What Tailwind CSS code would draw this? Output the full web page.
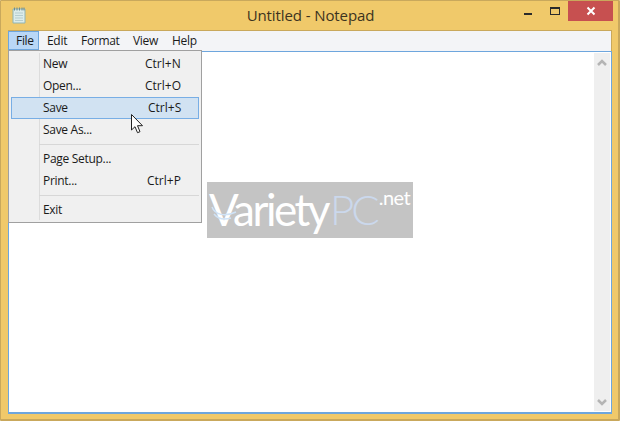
<!DOCTYPE html>
<html lang="en">
<head>
    <meta charset="UTF-8" />
    <title>Untitled - Notepad</title>
    <script src="https://cdn.jsdelivr.net/npm/@tailwindcss/browser@4"></script>
</head>
<body class="bg-white font-['Open_Sans',sans-serif] text-[12px] tracking-[-0.3px] text-[#1a1a1a]">
    <div class="relative w-[620px] h-[421px] overflow-hidden">
        <!-- window frame -->
        <div class="flex flex-col w-[620px] h-[421px] bg-[#f0c96a] border-t border-l border-r-2 border-b-2 border-[#c9a85c] rounded-[1px]">
            <div class="relative flex items-center h-[29px] shrink-0">
                <svg class="absolute left-[10px] top-[6px]" width="16" height="17" viewBox="0 0 16 17">
                    <path d="M2 2h12v14H2z" fill="#dcecea" stroke="#8fb4b4" />
                    <path d="M4 6h8M4 8.500h8M4 11h8M4 13.500h8" stroke="#b5cdd0" />
                    <path d="M3.500 0.500v3M6 0.500v3M8.500 0.500v3M11 0.500v3M13 0.500v3" stroke="#6d8c92" />
                </svg>
                <div class="flex-1 text-center text-[15px] tracking-[-0.1px] text-[#3c3320] pl-[2px]">Untitled - Notepad</div>
                <!-- caption buttons -->
                <div class="absolute right-[5px] top-0 flex items-start">
                    <div class="flex justify-center w-[26px] h-[20px] pt-[12px]"><div class="w-[8px] h-[2px] bg-[#2b2b2b]"></div></div>
                    <div class="flex justify-center w-[26px] h-[20px] ml-[1px] pt-[6px]"><div class="w-[10px] h-[8px] border border-t-2 border-[#2b2b2b]"></div></div>
                    <div class="flex items-center justify-center w-[45px] h-[20px] bg-[#c75050]">
                        <svg width="10" height="10" viewBox="0 0 10 10"><path d="M1.500 1.500l7 7M8.500 1.500l-7 7" stroke="#fff" stroke-width="2" /></svg>
                    </div>
                </div>
            </div>
            <!-- menu bar -->
            <div class="flex ml-[7px] mr-[6px] h-[21px] shrink-0 bg-[#f3f4f7] border-t border-r border-t-[#c9a85c] border-r-[#c9a85c]">
                <div class="flex items-center w-[31px] pl-[7px] h-[19px] bg-[#b9d7f6] border border-[#6ea6dd]">File</div>
                <div class="flex items-center pl-[8px] w-[34px]">Edit</div>
                <div class="flex items-center pl-[8px] w-[52px]">Format</div>
                <div class="flex items-center pl-[8px] w-[39px]">View</div>
                <div class="flex items-center pl-[8px]">Help</div>
            </div>
            <!-- text area -->
            <div class="flex flex-1 justify-end ml-[7px] mr-[6px] mb-[5px] bg-white border border-b-2 border-[#6ea6dd]">
                <div class="flex flex-col justify-between items-center w-[16px] mt-[1px] mr-[1px] mb-[1px] pt-[6px] pb-[5px] bg-[#efefef]">
                    <svg width="10" height="7" viewBox="0 0 10 7"><path d="M1 6l4-4 4 4" fill="none" stroke="#b4b4b4" stroke-width="2.500" /></svg>
                    <svg width="10" height="7" viewBox="0 0 10 7"><path d="M1 1l4 4 4-4" fill="none" stroke="#b4b4b4" stroke-width="2.500" /></svg>
                </div>
            </div>
        </div>

        <!-- file menu -->
        <div class="absolute left-[8px] top-[50px] w-[194px] h-[173px] bg-[#f0f0f0] border border-[#a0a0a0] px-[2px] py-[2px]">
            <div class="absolute left-[30px] top-[2px] bottom-[2px] w-px bg-[#dcdcdc]"></div>
            <div class="relative flex items-center h-[22px] pl-[32px]"><span class="w-[102px]">New</span><span class="tracking-normal">Ctrl+N</span></div>
            <div class="relative flex items-center h-[22px] pl-[32px]"><span class="w-[102px]">Open...</span><span class="tracking-normal">Ctrl+O</span></div>
            <div class="relative flex items-center h-[22px] pl-[31px] bg-[#d1e2f2] border border-[#78aee5]"><span class="w-[105px]">Save</span><span class="tracking-normal">Ctrl+S</span></div>
            <div class="relative flex items-center h-[22px] pl-[32px]">Save As...</div>
            <div class="relative h-[1px] my-[3px] ml-[28px] bg-[#d7d7d7]"></div>
            <div class="relative flex items-center h-[22px] pl-[32px]">Page Setup...</div>
            <div class="relative flex items-center h-[22px] pl-[32px]"><span class="w-[104px]">Print...</span><span class="tracking-normal">Ctrl+P</span></div>
            <div class="relative h-[1px] my-[3px] ml-[28px] bg-[#d7d7d7]"></div>
            <div class="relative flex items-center h-[22px] pl-[32px]">Exit</div>
        </div>

        <!-- mouse cursor -->
        <svg class="absolute left-[131px] top-[114px]" width="13" height="20" viewBox="0 0 13 20">
            <path d="M0.500 0.500v15.500l3.500-3.300 2.500 6 2.500-1-2.500-6h5z" fill="#fff" stroke="#222" />
        </svg>

        <!-- watermark -->
        <div class="absolute left-[207px] top-[182px] flex items-start w-[206px] h-[56px] bg-[#c4c4c4] pl-[2px] overflow-hidden font-['Lato',sans-serif] text-white">
            <span class="text-[44px] leading-[54px] tracking-[-2.5px]">Variety</span>
            <span class="text-[42px] leading-[54px] tracking-[-3px] font-light text-[#cbd8ec] ml-[2px]">PC</span>
            <span class="text-[20px] leading-[24px] tracking-[-0.5px] mt-[3px] ml-[2px]">.net</span>
            <svg class="absolute left-[4px] top-[22px]" width="26" height="18" viewBox="0 0 26 18">
                <path d="M1 3c3 8 13 10 24 5M3 10c4 5 10 6 17 4" fill="none" stroke="#cfe3f7" stroke-width="1.500" />
            </svg>
        </div>
    </div>
</body>
</html>
